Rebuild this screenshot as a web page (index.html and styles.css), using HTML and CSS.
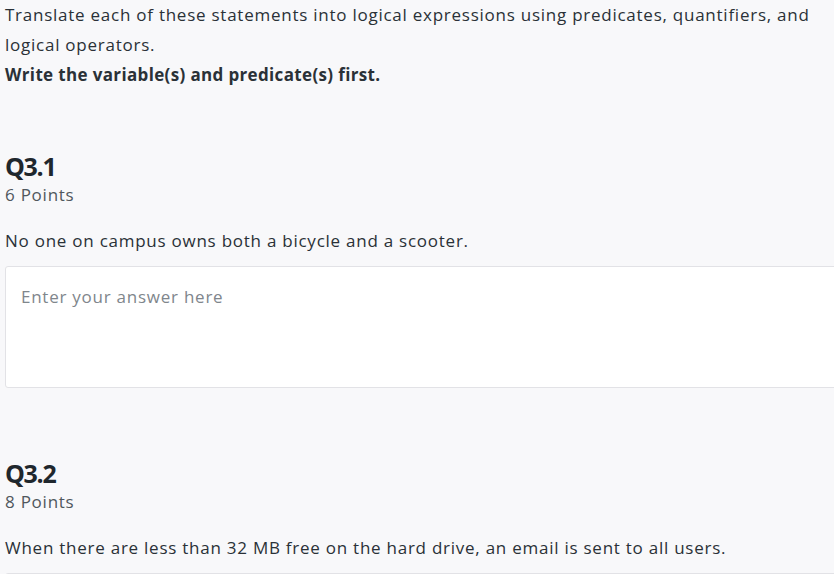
FILE: index.html
```html
<!DOCTYPE html>
<html>
<head>
<meta charset="utf-8">
<link rel="stylesheet" href="styles.css">
</head>
<body>
<div class="page">
  <div class="intro">
    <p class="text">Translate each of these statements into logical expressions using predicates, quantifiers, and logical operators.</p>
    <p class="text strong">Write the variable(s) and predicate(s) first.</p>
  </div>
  <section class="question">
    <h2 class="qtitle">Q3.1</h2>
    <div class="points">6 Points</div>
    <p class="prompt">No one on campus owns both a bicycle and a scooter.</p>
    <textarea class="answer" placeholder="Enter your answer here"></textarea>
  </section>
  <section class="question">
    <h2 class="qtitle">Q3.2</h2>
    <div class="points">8 Points</div>
    <p class="prompt">When there are less than 32 MB free on the hard drive, an email is sent to all users.</p>
    <textarea class="answer" placeholder="Enter your answer here"></textarea>
  </section>
</div>
</body>
</html>
```
FILE: styles.css
```css
html, body {
  margin: 0;
  padding: 0;
  background: #f8f8fa;
  overflow: hidden;
}
.page {
  padding: 0 0 0 5px;
  font-family: "Open Sans", Lato, sans-serif;
  color: #2a3137;
  font-size: 17px;
  letter-spacing: 0.75px;
}
.text {
  margin: 0;
  line-height: 30px;
}
.strong {
  font-weight: 700;
  letter-spacing: 0.35px;
}
.intro {
  padding-bottom: 60px;
}
.question {
  display: flex;
  flex-direction: column;
  padding-bottom: 69px;
}
.qtitle {
  margin: 0;
  font-size: 25px;
  font-weight: 700;
  line-height: 32px;
  color: #1f272d;
  letter-spacing: -1.3px;
}
.points {
  font-size: 17px;
  line-height: 26px;
  color: #50575d;
}
.prompt {
  margin: 20px 0 0 0;
  line-height: 26px;
}
.answer {
  margin-top: 12px;
  width: 860px;
  height: 122px;
  box-sizing: border-box;
  border: 1px solid #e2e2e6;
  border-radius: 3px;
  background: #fff;
  padding: 18px 15px;
  font-family: "Open Sans", Lato, sans-serif;
  font-size: 17px;
  letter-spacing: 0.75px;
  resize: none;
}
.answer::placeholder {
  color: #80868c;
}
```
